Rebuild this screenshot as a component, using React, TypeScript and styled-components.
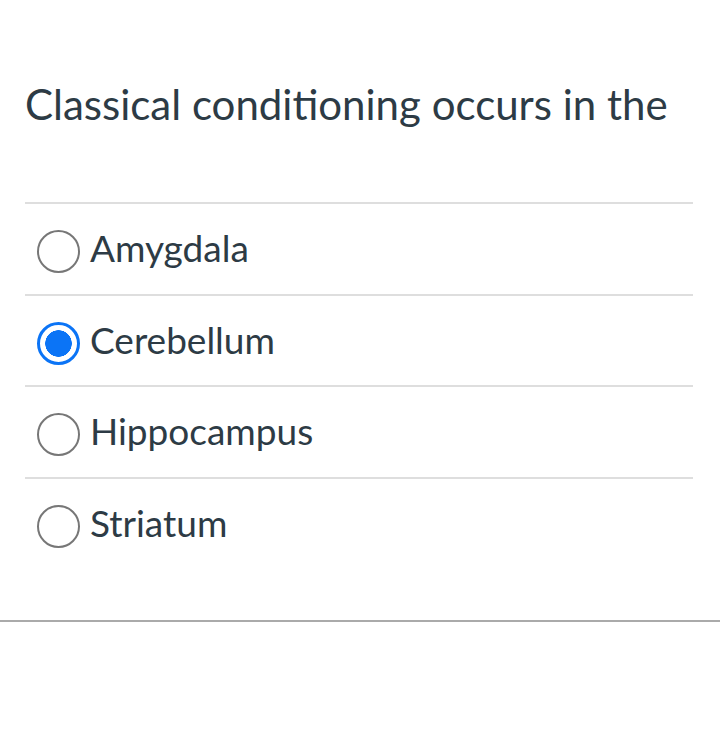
import styled, { createGlobalStyle } from "styled-components";

const GlobalStyle = createGlobalStyle`
  body {
    margin: 0;
    background: #fff;
    font-family: Lato, "Liberation Sans", sans-serif;
    color: #2d3b45;
  }
`;

const options = ["Amygdala", "Cerebellum", "Hippocampus", "Striatum"];
const selected = "Cerebellum";

const App = () => {
  return (
    <>
      <GlobalStyle />
      <QuizWrapper>
        <Question>Classical conditioning occurs in the</Question>
        <AnswerList>
          {options.map((opt) => (
            <AnswerRow key={opt}>
              <Radio $checked={opt === selected} />
              <AnswerText>{opt}</AnswerText>
            </AnswerRow>
          ))}
        </AnswerList>
      </QuizWrapper>
      <BottomRule />
    </>
  );
};

export default App;

const QuizWrapper = styled.div`
  padding: 0 27px 0 25px;
`;

const Question = styled.h1`
  margin: 0;
  padding-top: 80px;
  font-size: 42px;
  font-weight: 400;
  line-height: 48px;
  padding-bottom: 74px;
`;

const AnswerList = styled.ul`
  list-style: none;
  margin: 0;
  padding: 0;
`;

const AnswerRow = styled.li`
  box-sizing: border-box;
  height: 91.5px;
  border-top: 2px solid #dedede;
  display: flex;
  align-items: flex-start;
  padding: 26px 0 0 12px;
  gap: 10px;
`;

const Radio = styled.span<{ $checked: boolean }>`
  box-sizing: border-box;
  flex: none;
  width: 43px;
  height: 43px;
  border-radius: 50%;
  border: ${(p) => (p.$checked ? "3px solid #0b74f6" : "2px solid #777")};
  background: ${(p) =>
    p.$checked
      ? "radial-gradient(circle, #0b74f6 0 13px, #fff 13.5px)"
      : "#fff"};
`;

const AnswerText = styled.span`
  font-size: 37px;
  line-height: 36px;
`;

const BottomRule = styled.div`
  margin-top: 52px;
  height: 2px;
  background: #aaa;
`;
